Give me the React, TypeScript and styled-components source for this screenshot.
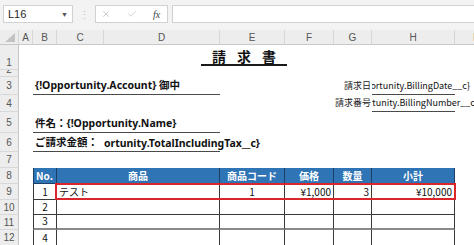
import React from 'react'
import styled, { createGlobalStyle, css } from 'styled-components'
import { X, Check } from 'lucide-react'

const GlobalStyle = createGlobalStyle`
  html, body {
    margin: 0;
    padding: 0;
    overflow: hidden;
    background: #ffffff;
  }
  body {
    font-family: 'Noto Sans CJK JP', 'Noto Sans', sans-serif;
  }
`

const Window = styled.div`
  width: 474px;
  height: 245px;
  overflow: hidden;
  background: #f3f3f3;
`

const FormulaBar = styled.div`
  display: flex;
  align-items: flex-start;
  height: 30px;
  padding: 5px 0 0 3px;
  box-sizing: border-box;
`

const Box = styled.div`
  height: 18px;
  box-sizing: border-box;
  background: #ffffff;
  border: 1px solid #d2d2d2;
  display: flex;
  align-items: center;
`

const NameBox = styled(Box)`
  width: 70px;
  justify-content: space-between;
  padding: 0 4px 0 4px;
  font-family: 'Liberation Sans', sans-serif;
  font-size: 11px;
  color: #262626;
`

const Caret = styled.span`
  font-size: 7px;
  color: #555;
`

const Grip = styled.div`
  width: 22px;
  height: 18px;
  display: flex;
  align-items: center;
  justify-content: center;
  color: #c4c4c4;
  font-size: 11px;
`

const FxBox = styled(Box)`
  width: 73px;
  gap: 16px;
  padding-left: 5px;
  color: #b0b0b0;
`

const Fx = styled.span`
  font-family: 'Liberation Serif', serif;
  font-style: italic;
  font-size: 10px;
  color: #444;
`

const FormulaInput = styled(Box)`
  flex: 1;
  margin-left: 4px;
  border-right: none;
`

const Sheet = styled.div`
  display: grid;
  grid-template-columns: 19px 14px 24px 47px 116px 65px 49px 38px 83px 40px;
  grid-template-rows: 15px 25px 7px 18px 17px 21px 19px 16px 16px 16px 15px 15px 16px;
  width: 495px;
  background: #ffffff;
  font-size: 10px;
  color: #111;
`

type Pos = { $c: number; $r: number; $cs?: number; $rs?: number }

const place = css<Pos>`
  grid-column: ${p => p.$c} / span ${p => p.$cs || 1};
  grid-row: ${p => p.$r} / span ${p => p.$rs || 1};
  min-width: 0;
  box-sizing: border-box;
`

const Corner = styled.div<Pos>`
  ${place};
  background: #ededed;
  border-right: 1px solid #d6d6d6;
  border-bottom: 1px solid #c8c8c8;
  display: flex;
  align-items: flex-end;
  justify-content: flex-end;
  padding: 0 3px 2px 0;
`

const Tri = styled.div`
  width: 0;
  height: 0;
  border-left: 10px solid transparent;
  border-bottom: 9px solid #c2c2c2;
`

const ColHead = styled.div<Pos>`
  ${place};
  background: #ededed;
  border-right: 1px solid #d6d6d6;
  border-bottom: 1px solid #c8c8c8;
  display: flex;
  align-items: center;
  justify-content: center;
  font-family: 'Liberation Sans', sans-serif;
  font-size: 10px;
  color: #555;
`

const RowHead = styled.div<Pos & { $low?: boolean }>`
  ${place};
  background: #ededed;
  border-right: 1px solid #c8c8c8;
  border-bottom: 1px solid #d8d8d8;
  display: flex;
  align-items: ${p => (p.$low ? 'flex-end' : 'center')};
  justify-content: center;
  overflow: hidden;
  font-family: 'Liberation Sans', sans-serif;
  font-size: 10px;
  line-height: 11px;
  color: #555;
  padding-bottom: ${p => (p.$low ? '1px' : '0')};
`

const Title = styled.div<Pos>`
  ${place};
  display: flex;
  align-items: flex-end;
  justify-content: center;
  padding-bottom: 4px;
`

const TitleText = styled.span`
  font-size: 14px;
  font-weight: 700;
  line-height: 15px;
  letter-spacing: 11px;
  padding-left: 11px;
  border-bottom: 2px solid #1a1a1a;
  color: #111;
`

const Field = styled.div<Pos & { $line?: boolean; $bold?: boolean }>`
  ${place};
  display: flex;
  align-items: flex-end;
  padding: 0 0 2px 2px;
  white-space: nowrap;
  font-family: ${p => (p.$bold ? "'Noto Sans', 'Noto Sans CJK JP', sans-serif" : "'Noto Sans CJK JP', sans-serif")};
  font-size: ${p => (p.$bold ? '10.5px' : '9px')};
  font-weight: ${p => (p.$bold ? 700 : 400)};
  line-height: 14px;
  color: #111;
  ${p => p.$line && css`
    border-bottom: 1px solid #4a4a4a;
  `};
`

const Label = styled(Field)`
  justify-content: flex-end;
  padding-right: 1px;
  color: #222;
`

const Clipped = styled(Field)<{ $right: number }>`
  overflow: hidden;
  justify-content: flex-end;
  padding-left: 0;
  padding-right: ${p => p.$right}px;

  & > span {
    flex-shrink: 0;
  }
`

const Rule = styled.div<Pos>`
  ${place};
  border-bottom: 1px solid #4a4a4a;
`

const HeadCell = styled.div<Pos & { $first?: boolean; $left?: boolean }>`
  ${place};
  background: #2f74b5;
  border-right: 1px solid #1d3f66;
  border-bottom: 1px solid #1d3f66;
  ${p => p.$first && css`
    border-left: 1px solid #1d3f66;
  `};
  display: flex;
  align-items: center;
  justify-content: ${p => (p.$left ? 'flex-start' : 'center')};
  padding-left: ${p => (p.$left ? '2px' : '0')};
  color: #ffffff;
  font-weight: 700;
  font-size: 10px;
`

const DataCell = styled.div<Pos & { $first?: boolean; $align?: string; $heavy?: boolean }>`
  ${place};
  border-right: 1px solid #3a3a3a;
  border-bottom: ${p => (p.$heavy ? '2px solid #8a8a8a' : '1px solid #3a3a3a')};
  ${p => p.$first && css`
    border-left: 1px solid #3a3a3a;
  `};
  display: flex;
  align-items: flex-end;
  justify-content: ${p => p.$align || 'flex-start'};
  padding: 0 2px 1px 2px;
  font-size: 10px;
  line-height: 13px;
  color: #111;
  white-space: nowrap;
`

const Highlight = styled.div<Pos>`
  ${place};
  margin: -1px -1px 0 -2px;
  border: 2px solid #d9262b;
`

const cols = ['A', 'B', 'C', 'D', 'E', 'F', 'G', 'H', 'I']

const heads = [
  { c: 3, cs: 1, text: 'No.', left: true },
  { c: 4, cs: 2, text: '商品' },
  { c: 6, cs: 1, text: '商品コード' },
  { c: 7, cs: 1, text: '価格' },
  { c: 8, cs: 1, text: '数量' },
  { c: 9, cs: 1, text: '小計' },
]

const items = [
  { no: '1', name: 'テスト', code: '1', price: '¥1,000', qty: '3', sub: '¥10,000' },
  { no: '2', name: '', code: '', price: '', qty: '', sub: '' },
  { no: '3', name: '', code: '', price: '', qty: '', sub: '' },
  { no: '4', name: '', code: '', price: '', qty: '', sub: '' },
]

export default function App() {
  return (
    <Window>
      <GlobalStyle />
      <FormulaBar>
        <NameBox>
          <span>L16</span>
          <Caret>▼</Caret>
        </NameBox>
        <Grip>⋮</Grip>
        <FxBox>
          <X size={10} strokeWidth={1.5} />
          <Check size={10} strokeWidth={1.5} />
          <Fx>fx</Fx>
        </FxBox>
        <FormulaInput />
      </FormulaBar>

      <Sheet>
        <Corner $c={1} $r={1}><Tri /></Corner>
        {cols.map((l, i) => (
          <ColHead key={l} $c={i + 2} $r={1}>{l}</ColHead>
        ))}
        {Array.from({ length: 12 }, (_, i) => (
          <RowHead key={`r-${i}`} $c={1} $r={i + 2} $low={i < 2}>{i + 1}</RowHead>
        ))}

        <Title $c={3} $cs={7} $r={2}>
          <TitleText>請求書</TitleText>
        </Title>

        <Field $c={3} $cs={3} $r={4} $bold $line>{'{!Opportunity.Account} 御中'}</Field>
        <Label $c={8} $r={4}>請求日</Label>
        <Rule $c={9} $r={4} />
        <Clipped $c={9} $cs={2} $r={4} $right={25}>
          <span>{'{!Opportunity.BillingDate__c}'}</span>
        </Clipped>
        <Label $c={8} $r={5}>請求番号</Label>
        <Rule $c={9} $r={5} />
        <Clipped $c={9} $cs={2} $r={5} $right={17}>
          <span>{'{!Opportunity.BillingNumber__c}'}</span>
        </Clipped>

        <Field $c={3} $cs={3} $r={6} $bold $line>{'件名：{!Opportunity.Name}'}</Field>
        <Field $c={3} $cs={3} $r={7} $bold $line>ご請求金額：</Field>
        <Clipped $c={5} $cs={3} $r={7} $bold $right={74}>
          <span>{'{!Opportunity.TotalIncludingTax__c}'}</span>
        </Clipped>

        {heads.map((h, i) => (
          <HeadCell key={h.text} $c={h.c} $cs={h.cs} $r={9} $first={i === 0} $left={h.left}>
            {h.text}
          </HeadCell>
        ))}

        {items.map((it, i) => {
          const r = 10 + i
          const heavy = i === 2
          return (
            <React.Fragment key={it.no}>
              <DataCell $c={3} $r={r} $first $align="center" $heavy={heavy}>{it.no}</DataCell>
              <DataCell $c={4} $cs={2} $r={r} $heavy={heavy}>{it.name}</DataCell>
              <DataCell $c={6} $r={r} $align="center" $heavy={heavy}>{it.code}</DataCell>
              <DataCell $c={7} $r={r} $align="flex-end" $heavy={heavy}>{it.price}</DataCell>
              <DataCell $c={8} $r={r} $align="flex-end" $heavy={heavy}>{it.qty}</DataCell>
              <DataCell $c={9} $r={r} $align="flex-end" $heavy={heavy}>{it.sub}</DataCell>
            </React.Fragment>
          )
        })}
        <Highlight $c={4} $cs={6} $r={10} />
      </Sheet>
    </Window>
  )
}
